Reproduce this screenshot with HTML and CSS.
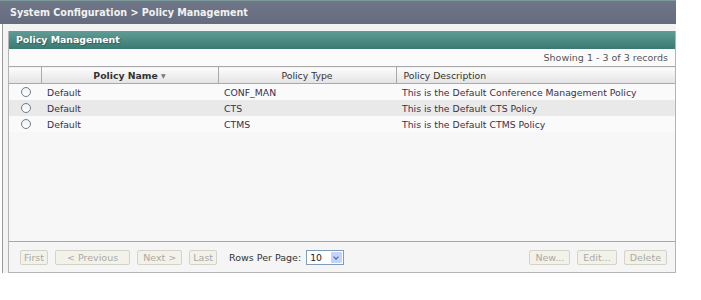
FILE: index.html
```html
<!DOCTYPE html>
<html lang="en">
<head>
  <meta charset="UTF-8">
  <title>Policy Management</title>
  <link rel="stylesheet" href="styles.css">
</head>
<body>
  <div class="topbar">System Configuration &gt; Policy Management</div>

  <div class="frame">
    <div class="panel">
      <div class="panel-title">Policy Management</div>
      <div class="records">Showing 1 - 3 of 3 records</div>

      <div class="grid-wrap">
        <table class="grid">
          <colgroup>
            <col class="c-sel">
            <col class="c-name">
            <col class="c-type">
            <col>
          </colgroup>
          <thead>
            <tr>
              <th></th>
              <th class="center sorted">Policy Name <span class="arrow">&#9660;</span></th>
              <th class="center">Policy Type</th>
              <th>Policy Description</th>
            </tr>
          </thead>
          <tbody>
            <tr>
              <td class="sel"><span class="radio"></span></td>
              <td>Default</td>
              <td>CONF_MAN</td>
              <td>This is the Default Conference Management Policy</td>
            </tr>
            <tr class="alt">
              <td class="sel"><span class="radio"></span></td>
              <td>Default</td>
              <td>CTS</td>
              <td>This is the Default CTS Policy</td>
            </tr>
            <tr>
              <td class="sel"><span class="radio"></span></td>
              <td>Default</td>
              <td>CTMS</td>
              <td>This is the Default CTMS Policy</td>
            </tr>
          </tbody>
        </table>
      </div>

      <div class="pager">
        <div class="pager-left">
          <button class="btn" disabled>First</button>
          <button class="btn wide" disabled>&lt; Previous</button>
          <button class="btn mid" disabled>Next &gt;</button>
          <button class="btn" disabled>Last</button>
          <span class="rows">
            <span class="rows-label">Rows Per Page:</span>
            <span class="select">10<span class="select-arrow"></span></span>
          </span>
        </div>
        <div class="pager-right">
          <button class="btn mid" disabled>New...</button>
          <button class="btn mid" disabled>Edit...</button>
          <button class="btn mid" disabled>Delete</button>
        </div>
      </div>
    </div>
  </div>
</body>
</html>
```

FILE: styles.css
```css
/* General */
* {
  box-sizing: border-box;
  margin: 0;
  padding: 0;
}

body {
  font-family: "DejaVu Sans", Verdana, sans-serif;
  font-size: 9.3px;
  color: #3e2f48;
  background: #fff;
  width: 701px;
}

/* Top bar */
.topbar {
  width: 676px;
  height: 24px;
  line-height: 23px;
  padding-left: 10px;
  background: linear-gradient(to bottom, #6f7687, #656c7d);
  border-top: 1px solid #7d9a9a;
  color: #f2f2f2;
  font-size: 9.6px;
  font-weight: bold;
}

/* Outer frame */
.frame {
  margin-left: 2px;
  width: 674px;
  height: 249px;
  border-left: 1px solid #9c9c9c;
  background: #f3f3f3;
  padding: 7px 0 0 5px;
}

/* Panel */
.panel {
  width: 668px;
  height: 242px;
  border: 1px solid #b4b4b4;
  border-top: none;
  background: #f7f7f7;
  display: flex;
  flex-direction: column;
}

.panel-title {
  height: 18px;
  line-height: 17px;
  padding-left: 7px;
  background: linear-gradient(to bottom, #5f9c95, #3a7a73);
  color: #fff;
  font-size: 9.4px;
  font-weight: bold;
  text-shadow: 1px 1px 1px rgba(0, 0, 0, 0.3);
}

.records {
  height: 17px;
  line-height: 17px;
  text-align: right;
  padding-right: 7px;
  background: #fbfbfb;
  color: #555;
  font-size: 9.5px;
}

/* Grid */
.grid-wrap {
  flex: 1;
}

.grid {
  width: 100%;
  border-collapse: collapse;
  table-layout: fixed;
}

.c-sel { width: 32px; }
.c-name { width: 177px; }
.c-type { width: 178px; }

.grid thead th {
  height: 17px;
  font-weight: normal;
  text-align: left;
  padding-left: 7px;
  color: #333;
  background: linear-gradient(to bottom, #fdfdfd, #e3e3e3);
  border: 1px solid #a9a9a9;
  border-left-color: #c2c2c2;
}

.grid thead th:first-child {
  border-left: none;
}

.grid thead th:last-child {
  border-right: none;
}

.grid thead th.center {
  text-align: center;
  padding-left: 0;
}

.grid thead th.sorted {
  font-weight: bold;
}

.arrow {
  font-size: 6px;
  color: #777;
  vertical-align: 1px;
}

.grid tbody td {
  height: 16px;
  padding-left: 6px;
  padding-top: 1px;
  white-space: nowrap;
}

.grid tbody tr {
  background: #fafafa;
}

.grid tbody tr.alt {
  background: #e9e9e9;
}

.grid td.sel {
  padding-left: 12px;
}

.radio {
  display: block;
  width: 10px;
  height: 10px;
  border: 1px solid #6f7b88;
  border-radius: 50%;
  background: linear-gradient(to bottom, #eef0f2, #ffffff);
}

/* Pager */
.pager {
  height: 31px;
  border-top: 1px solid #a8a8a8;
  background: #f5f5f5;
  display: flex;
  justify-content: space-between;
  align-items: center;
  padding: 0 8px 0 11px;
}

.pager-left,
.pager-right {
  display: flex;
  align-items: center;
  gap: 7px;
}

.btn {
  height: 15px;
  padding: 0 3px;
  font-family: "DejaVu Sans", Verdana, sans-serif;
  font-size: 9.5px;
  color: #a9a9a4;
  background: #f3f2ea;
  border: 1px solid #d4d3c8;
  border-radius: 2px;
}

.btn.wide {
  padding: 0 11px;
}

.btn.mid {
  padding: 0 5px;
}

.rows {
  display: flex;
  align-items: center;
  gap: 5px;
  margin-left: 5px;
}

.rows-label {
  font-size: 9.5px;
  color: #333;
}

.select {
  display: flex;
  align-items: center;
  justify-content: space-between;
  width: 38px;
  height: 15px;
  padding-left: 3px;
  border: 1px solid #7f9db9;
  background: #fff;
  color: #222;
}

.select-arrow {
  width: 11px;
  height: 11px;
  margin-right: 1px;
  background: #c3d3fd;
  border-radius: 1px;
  position: relative;
}

.select-arrow::after {
  content: "";
  position: absolute;
  left: 3px;
  top: 3px;
  width: 3px;
  height: 3px;
  border-right: 1px solid #4d6185;
  border-bottom: 1px solid #4d6185;
  transform: rotate(45deg);
}
```
